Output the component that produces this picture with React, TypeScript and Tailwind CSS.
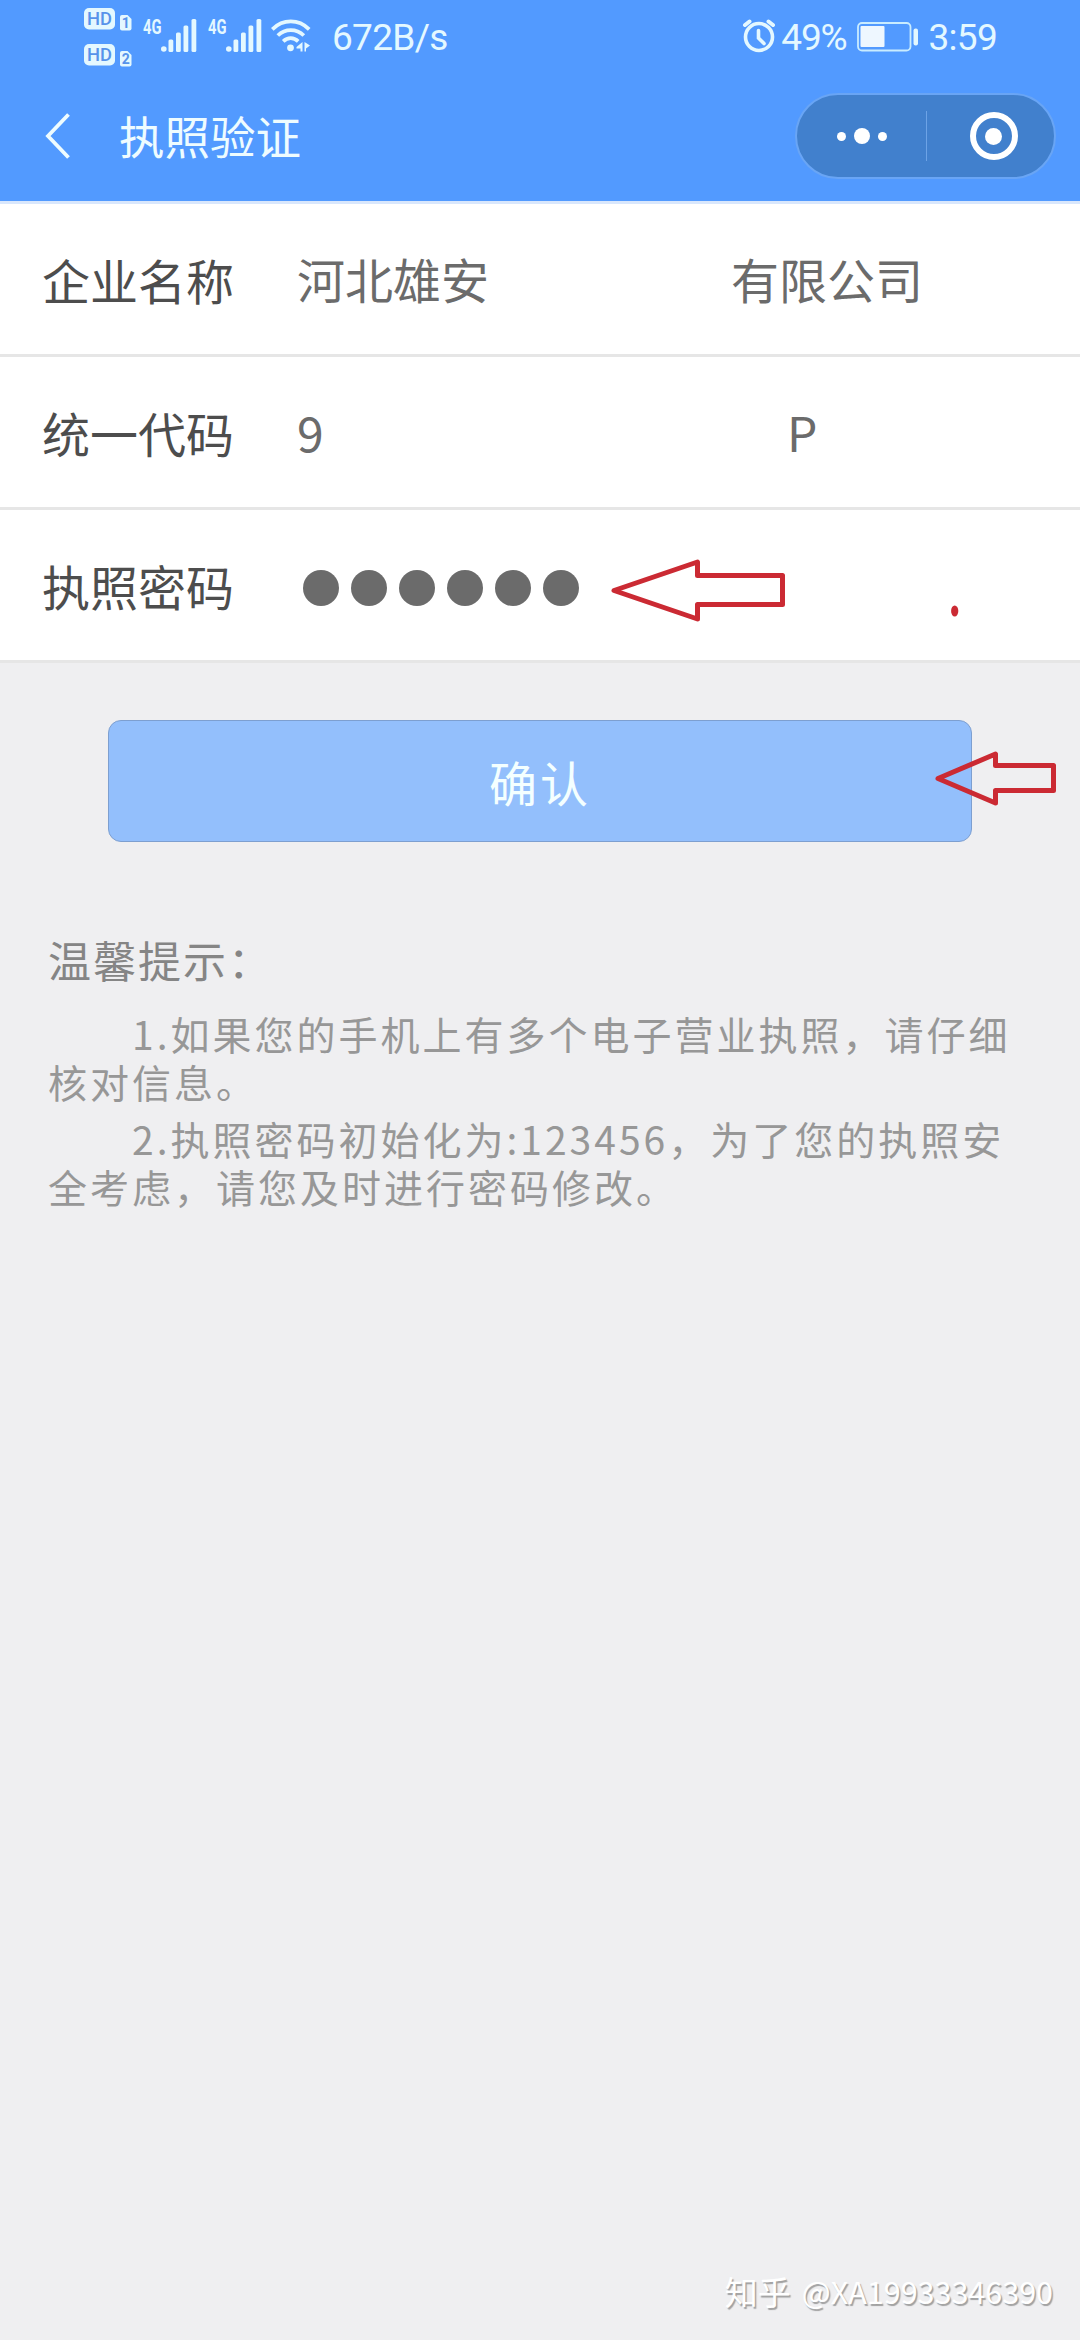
import type { ReactNode } from 'react'

const SimBadge = ({ slot }: { slot: string }) => (
  <svg width="48" height="24" viewBox="0 0 48 24">
    <rect x="0" y="0" width="31" height="21.5" rx="5" fill="#e4f8ff" />
    <text x="15.5" y="17.2" textAnchor="middle" textLength="25" lengthAdjust="spacingAndGlyphs" fontSize="18" fontWeight="500" className="font-['Roboto',sans-serif]" fill="#5793ea">
      HD
    </text>
    <path d="M36 9a2 2 0 0 1 2-2h5.500l4 4v9.500a2 2 0 0 1-2 2h-7.500a2 2 0 0 1-2-2z" fill="#e4f8ff" />
    <text x="41.700" y="20" textAnchor="middle" fontSize="14" fontWeight="700" className="font-['Roboto',sans-serif]" fill="#5793ea">
      {slot}
    </text>
  </svg>
)

const Signal = () => (
  <svg width="54" height="40" viewBox="0 -4 54 40">
    <text x="0" y="16" textLength="18.500" lengthAdjust="spacingAndGlyphs" fontSize="20" fontWeight="700" className="font-['Roboto',sans-serif]" fill="#e4f8ff">
      4G
    </text>
    <g fill="#e4f8ff">
      <circle cx="20.800" cy="31" r="2.800" />
      <rect x="25.500" y="21.500" width="4.800" height="12.500" rx="1.500" />
      <rect x="33" y="14.500" width="4.800" height="19.500" rx="1.500" />
      <rect x="40.500" y="7.500" width="4.800" height="26.500" rx="1.500" />
      <rect x="48.500" y="1" width="4.800" height="33" rx="1.500" />
    </g>
  </svg>
)

const Wifi = () => (
  <svg width="40" height="34" viewBox="0 0 40 34" fill="none" stroke="#e4f8ff" strokeWidth="3.800">
    <path d="M1.300 10.300C12-.2 27.500-.2 38.200 10.300" />
    <path d="M6.800 16.500c7.500-7.200 18.500-7.200 26 0" />
    <path d="M12.200 22.300c4.500-4.200 10.500-4.200 15 0" />
    <circle cx="19.500" cy="28.800" r="3.400" fill="#e4f8ff" stroke="none" />
    <path d="M31.500 23v9.500h-2v-3h-4v-1.500zM33.500 23v9.500h1.500v-3l4-3z" fill="#e4f8ff" stroke="none" />
  </svg>
)

const Alarm = () => (
  <svg width="34" height="36" viewBox="0 0 34 36" fill="none" stroke="#e4f8ff">
    <circle cx="17" cy="19" r="13.500" strokeWidth="3.600" />
    <path d="M3 7 7.500 3.500M31 7l-4.500-3.500" strokeWidth="4" strokeLinecap="round" />
    <path d="M16.500 12.500v7.500l5.500 5.500" strokeWidth="3.600" strokeLinecap="round" />
  </svg>
)

const Battery = () => (
  <svg width="62" height="30" viewBox="0 0 62 30">
    <rect x="1" y="1" width="52.500" height="27.500" rx="4" fill="none" stroke="#c9ecff" strokeWidth="1.800" />
    <rect x="3.500" y="4" width="24" height="21" rx="1" fill="#eef7ff" />
    <rect x="56.500" y="6.500" width="4.500" height="17" rx="2" fill="#e4f8ff" />
  </svg>
)

const StatusBar = () => (
  <div className="flex h-[75px] items-start pl-[84px] pr-[83px] font-['Roboto',sans-serif] text-[37px] leading-[75px] text-[#e4f8ff]">
    <div className="flex flex-col gap-3 pt-2">
      <SimBadge slot="1" />
      <SimBadge slot="2" />
    </div>
    <div className="ml-[11px] flex gap-[11px] pt-[14px]">
      <Signal />
      <Signal />
    </div>
    <div className="ml-[9px] pt-[19px]">
      <Wifi />
    </div>
    <span className="ml-[21px] tracking-[-0.7px]">672B/s</span>
    <div className="ml-auto flex">
      <div className="pt-[18px]">
        <Alarm />
      </div>
      <span className="ml-[5px] tracking-[-1.2px]">49%</span>
      <div className="ml-[11px] pt-[22px]">
        <Battery />
      </div>
      <span className="ml-[9px] tracking-[-0.7px]">3:59</span>
    </div>
  </div>
)

const NavBar = () => (
  <div className="flex h-[126px] items-start pl-[45px] pr-6 pt-[18px]">
    <div className="flex h-[86px] flex-1 items-center">
      <svg width="26" height="48" viewBox="0 0 26 48" fill="none" stroke="#eefcff" strokeWidth="3.800">
        <path d="M23.500 2.500 3 24l20.500 21.500" />
      </svg>
      <h1 className="ml-[48px] text-[45.500px] leading-none text-[#eefcff]">执照验证</h1>
    </div>
    <div className="flex h-[86px] w-[261px] items-center rounded-full border-2 border-[#69a5f5] bg-[#4180cd]">
      <div className="flex w-[129px] items-center justify-center gap-[8px]">
        <span className="size-[9px] rounded-full bg-white" />
        <span className="size-4 rounded-full bg-white" />
        <span className="size-[9px] rounded-full bg-white" />
      </div>
      <div className="h-[50px] w-px bg-[#6da3e6]" />
      <div className="flex flex-1 items-center justify-center pl-[6px]">
        <div className="flex size-12 items-center justify-center rounded-full border-[6px] border-white">
          <span className="size-[17px] rounded-full bg-white" />
        </div>
      </div>
    </div>
  </div>
)

const Row = ({ label, children }: { label: string; children: ReactNode }) => (
  <div className="flex h-[153px] items-center border-b-[3px] border-[#e6e6e6] bg-white pl-[42px] text-[48px] leading-none text-[#4d4d4d]">
    <span className="w-[255px] pb-px">{label}</span>
    <div className="flex flex-1 items-center pb-0.5 text-[#6b6b6b]">{children}</div>
  </div>
)

// hand-drawn marks that sit over the form
const Marks = () => (
  <svg className="absolute left-0 top-0" width="1080" height="900" viewBox="0 0 1080 900" fill="none" stroke="#cb2a33" strokeLinejoin="round">
    <path d="M614 590.500 697.500 562v13.500h85v29h-85V619z" strokeWidth="5" />
    <path d="M938 778.500l57.500-24.500v11.500h58v25h-58V803z" strokeWidth="5" />
    <ellipse cx="954.700" cy="611" rx="3.600" ry="5.600" fill="#cb2a33" stroke="none" />
  </svg>
)

export default function App() {
  return (
    <div className="relative flex h-[2340px] w-[1080px] flex-col overflow-hidden bg-[#efeff1] font-['Noto_Sans_CJK_SC',sans-serif]">
      <header className="border-b-[3px] border-[#d9e7fc] bg-[#529aff]">
        <StatusBar />
        <NavBar />
      </header>

      <main className="flex flex-1 flex-col">
        <Row label="企业名称">
          <span className="w-[434px]">河北雄安</span>
          <span>有限公司</span>
        </Row>
        <Row label="统一代码">
          <span className="w-[490px]">9</span>
          <span>P</span>
        </Row>
        <Row label="执照密码">
          <div className="flex gap-3 pl-[6px] pt-2">
            {[0, 1, 2, 3, 4, 5].map((i) => (
              <span key={i} className="size-9 rounded-full bg-[#6b6b6b]" />
            ))}
          </div>
        </Row>

        <button className="mx-[108px] mt-[57px] h-[122px] rounded-[13px] border border-[#7d9fd0] bg-[#93bffc] text-[48px] leading-none tracking-[3px] text-[#f4ffff]">
          确认
        </button>

        <section className="px-12 pt-[82px] tracking-[3px]">
          <h2 className="text-[43px] leading-[70px] tracking-[2px] text-[#858585]">温馨提示：</h2>
          <div className="mt-[15px] flex flex-col gap-[9px] text-[39px] leading-[48px] text-[#979797]">
            <p>　　1.如果您的手机上有多个电子营业执照，请仔细核对信息。</p>
            <p>　　2.执照密码初始化为:123456，为了您的执照安全考虑，请您及时进行密码修改。</p>
          </div>
        </section>

        <footer className="mt-auto flex items-center justify-end gap-[11px] pb-[26px] pr-[27px] text-[30.500px] leading-[46px] text-white [text-shadow:1.5px_1.5px_1px_#a0a0a0]">
          <span className="text-[33px]">知乎</span>
          <span>@XA19933346390</span>
        </footer>
      </main>

      <Marks />
    </div>
  )
}
